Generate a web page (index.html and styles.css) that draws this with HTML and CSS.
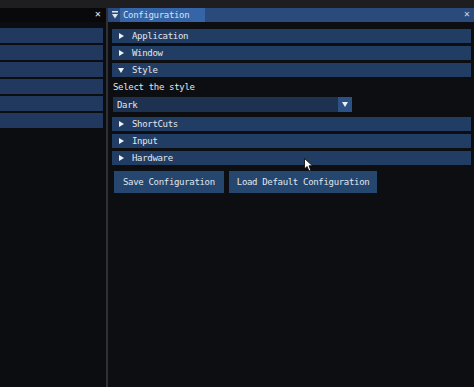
FILE: index.html
```html
<!DOCTYPE html>
<html>
<head>
<meta charset="utf-8">
<link rel="stylesheet" href="styles.css">
</head>
<body>
<div class="topband"></div>
<div class="main">
  <div class="win-left">
    <div class="title-left">
      <span class="close">&#x2715;</span>
    </div>
    <div class="left-rows">
      <div class="lrow"></div>
      <div class="lrow"></div>
      <div class="lrow"></div>
      <div class="lrow"></div>
      <div class="lrow"></div>
      <div class="lrow"></div>
    </div>
  </div>
  <div class="divider"></div>
  <div class="win-right">
    <div class="title-right">
      <svg class="menu-icon" width="6" height="8" viewBox="0 0 6 8"><rect x="0" y="0" width="6" height="1.5" fill="#dfe6f2"/><polygon points="0,3 6,3 3,7.5" fill="#dfe6f2"/></svg>
      <div class="tab"><span>Configuration</span></div>
      <span class="close close-right">&#x2715;</span>
    </div>
    <div class="content">
      <div class="header"><svg class="tri" width="5" height="6" viewBox="0 0 5 6"><polygon points="0,0 5,3 0,6" fill="#eef1f6"/></svg><span>Application</span></div>
      <div class="header"><svg class="tri" width="5" height="6" viewBox="0 0 5 6"><polygon points="0,0 5,3 0,6" fill="#eef1f6"/></svg><span>Window</span></div>
      <div class="header"><svg class="tri tri-down" width="6" height="5" viewBox="0 0 6 5"><polygon points="0,0 6,0 3,5" fill="#eef1f6"/></svg><span>Style</span></div>
      <div class="label">Select the style</div>
      <div class="combo">
        <span class="combo-text">Dark</span>
        <span class="combo-arrow"><svg width="6" height="5" viewBox="0 0 6 5"><polygon points="0,0 6,0 3,5" fill="#eef1f6"/></svg></span>
      </div>
      <div class="header gap-top"><svg class="tri" width="5" height="6" viewBox="0 0 5 6"><polygon points="0,0 5,3 0,6" fill="#eef1f6"/></svg><span>ShortCuts</span></div>
      <div class="header"><svg class="tri" width="5" height="6" viewBox="0 0 5 6"><polygon points="0,0 5,3 0,6" fill="#eef1f6"/></svg><span>Input</span></div>
      <div class="header"><svg class="tri" width="5" height="6" viewBox="0 0 5 6"><polygon points="0,0 5,3 0,6" fill="#eef1f6"/></svg><span>Hardware</span></div>
      <div class="buttons">
        <div class="btn btn-save">Save Configuration</div>
        <div class="btn btn-load">Load Default Configuration</div>
      </div>
    </div>
  </div>
</div>
<svg class="cursor" width="10" height="14" viewBox="0 0 10 14"><polygon points="0.5,0.5 0.5,11 3,8.5 5,13 6.8,12.2 5,7.8 8.5,7.8" fill="#ffffff" stroke="#000000" stroke-width="0.8"/></svg>
</body>
</html>
```

FILE: styles.css
```css
html, body {
  margin: 0;
  padding: 0;
}
body {
  width: 474px;
  height: 387px;
  overflow: hidden;
  background: #0d0e12;
  font-family: "DejaVu Sans Mono", "Liberation Mono", monospace;
  font-size: 9px;
  letter-spacing: -0.32px;
  color: #e2e6ec;
  position: relative;
}
.topband {
  height: 8px;
  background: #1e1e20;
}
.main {
  display: flex;
  height: 379px;
}
.win-left {
  width: 106px;
  background: #0c0d10;
  display: flex;
  flex-direction: column;
}
.title-left {
  height: 14px;
  background: #09090b;
  display: flex;
  align-items: center;
  justify-content: flex-end;
  padding-right: 5px;
}
.close {
  font-family: "DejaVu Sans", sans-serif;
  font-size: 8px;
  color: #e8ebf0;
  line-height: 1;
}
.left-rows {
  display: flex;
  flex-direction: column;
  gap: 2px;
  padding-top: 6px;
  padding-right: 3px;
}
.lrow {
  height: 15px;
  background: #21395e;
}
.divider {
  width: 2px;
  background: #2f3035;
}
.win-right {
  flex: 1;
  background: #0d0e12;
  display: flex;
  flex-direction: column;
}
.title-right {
  height: 14px;
  background: #294a7a;
  display: flex;
  align-items: center;
  padding-left: 4px;
  padding-right: 4px;
}
.menu-icon {
  margin-right: 2px;
}
.tab {
  width: 82px;
  height: 14px;
  background: #3565a6;
  display: flex;
  align-items: center;
  padding-left: 3px;
  color: #d6e2f4;
}
.close-right {
  margin-left: auto;
  color: #cfd8e6;
}
.content {
  display: flex;
  flex-direction: column;
  gap: 3px;
  padding: 7px 3px 0 4px;
}
.header {
  height: 14px;
  background: #223d63;
  display: flex;
  align-items: center;
}
.tri {
  margin-left: 7px;
  margin-right: 8px;
  flex: none;
}
.tri-down {
  margin-left: 6px;
  margin-right: 8px;
}
.label {
  height: 14px;
  display: flex;
  align-items: center;
  padding-left: 1px;
}
.combo {
  width: 239px;
  height: 15px;
  margin-left: 1px;
  background: #1d3150;
  display: flex;
  align-items: center;
}
.combo-text {
  padding-left: 4px;
  flex: 1;
}
.combo-arrow {
  width: 14px;
  height: 15px;
  background: #2c5285;
  display: flex;
  align-items: center;
  justify-content: center;
}
.gap-top {
  margin-top: 2px;
}
.buttons {
  display: flex;
  gap: 5px;
  margin-top: 3px;
  margin-left: 2px;
}
.btn {
  height: 22px;
  background: #24466f;
  display: flex;
  align-items: center;
  justify-content: center;
  padding: 0 9px;
}
.btn-load {
  padding: 0 8px;
}
.cursor {
  position: absolute;
  left: 304px;
  top: 158px;
}
```
